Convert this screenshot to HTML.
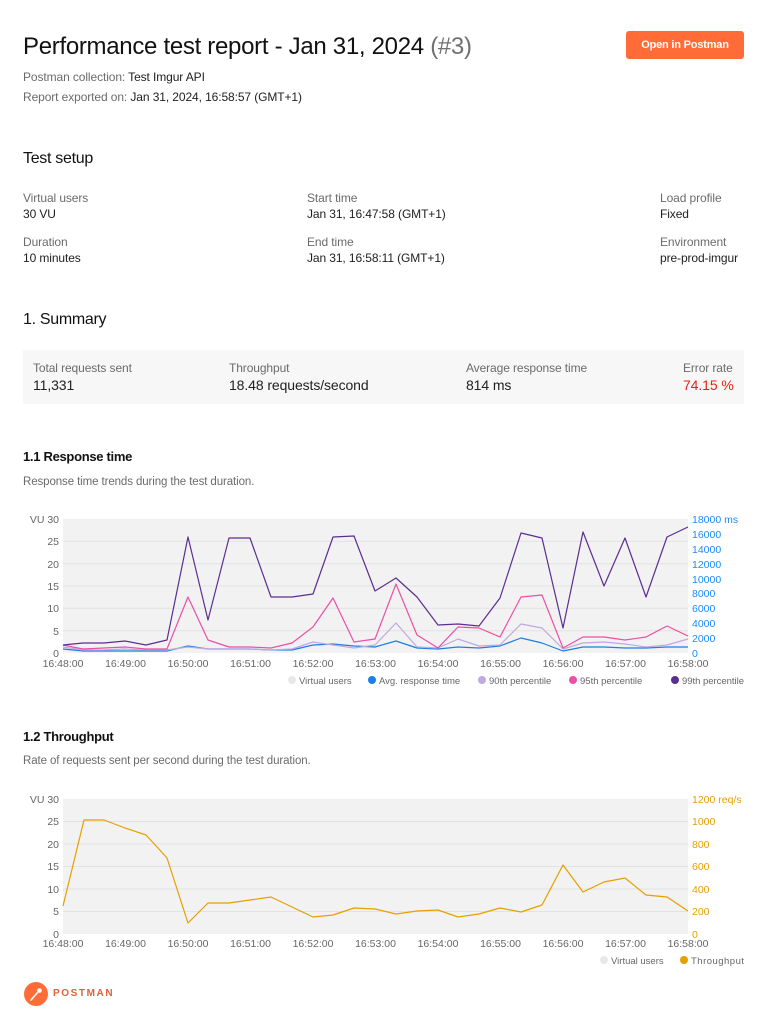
<!DOCTYPE html>
<html><head><meta charset="utf-8"><style>
*{margin:0;padding:0;box-sizing:border-box}
body{width:768px;height:1024px;background:#fff;font-family:"Liberation Sans",sans-serif;color:#212121;position:relative;overflow:hidden}
.a{position:absolute;white-space:nowrap;line-height:1}
.g{color:#6b6b6b}
.s{font-size:12px;letter-spacing:-0.1px}
.v{font-size:12px;letter-spacing:-0.1px;color:#212121}
</style></head><body>
<div class="a" style="left:23px;top:35px;font-size:24px;letter-spacing:-0.3px;color:#111">Performance test report - Jan 31, 2024 <span style="color:#707070">(#3)</span></div>
<div class="a" style="left:626px;top:31px;width:118px;height:28px;background:#ff6c37;border-radius:3px;color:#fff;font-size:11px;font-weight:bold;text-align:center;line-height:28px;letter-spacing:-0.2px">Open in Postman</div>
<div class="a s g" style="left:23px;top:71px">Postman collection: <span style="color:#212121">Test Imgur API</span></div>
<div class="a s g" style="left:23px;top:91px">Report exported on: <span style="color:#212121">Jan 31, 2024, 16:58:57 (GMT+1)</span></div>

<div class="a" style="left:23px;top:151px;font-size:16px;letter-spacing:-0.3px;color:#111">Test setup</div>
<div class="a s g" style="left:23px;top:192px">Virtual users</div>
<div class="a v" style="left:23px;top:208px">30 VU</div>
<div class="a s g" style="left:23px;top:236px">Duration</div>
<div class="a v" style="left:23px;top:252px">10 minutes</div>
<div class="a s g" style="left:307px;top:192px">Start time</div>
<div class="a v" style="left:307px;top:208px">Jan 31, 16:47:58 (GMT+1)</div>
<div class="a s g" style="left:307px;top:236px">End time</div>
<div class="a v" style="left:307px;top:252px">Jan 31, 16:58:11 (GMT+1)</div>
<div class="a s g" style="left:660px;top:192px">Load profile</div>
<div class="a v" style="left:660px;top:208px">Fixed</div>
<div class="a s g" style="left:660px;top:236px">Environment</div>
<div class="a v" style="left:660px;top:252px">pre-prod-imgur</div>

<div class="a" style="left:23px;top:312px;font-size:16px;letter-spacing:-0.3px;color:#111">1. Summary</div>
<div class="a" style="left:23px;top:350px;width:721px;height:54px;background:#f7f7f7"></div>
<div class="a s g" style="left:33px;top:362px">Total requests sent</div>
<div class="a" style="left:33px;top:378px;font-size:14px;letter-spacing:-0.1px">11,331</div>
<div class="a s g" style="left:229px;top:362px">Throughput</div>
<div class="a" style="left:229px;top:378px;font-size:14px;letter-spacing:-0.1px">18.48 requests/second</div>
<div class="a s g" style="left:466px;top:362px">Average response time</div>
<div class="a" style="left:466px;top:378px;font-size:14px;letter-spacing:-0.1px">814 ms</div>
<div class="a s g" style="left:683px;top:362px">Error rate</div>
<div class="a" style="left:683px;top:378px;font-size:14px;letter-spacing:-0.1px;color:#eb2013">74.15 %</div>

<div class="a" style="left:23px;top:450px;font-size:13px;font-weight:bold;letter-spacing:-0.3px;color:#111">1.1 Response time</div>
<div class="a s g" style="left:23px;top:477px;font-size:11.5px">Response time trends during the test duration.</div>

<svg class="a" style="left:0;top:505px" width="768" height="190" viewBox="0 505 768 190" font-family="Liberation Sans, sans-serif" font-size="10.5">
<rect x="63" y="519" width="625" height="134" fill="#f2f2f2"/>
<g stroke="#e2e2e2" stroke-width="1">
<line x1="63" x2="688" y1="541.3" y2="541.3"/><line x1="63" x2="688" y1="563.7" y2="563.7"/><line x1="63" x2="688" y1="586" y2="586"/><line x1="63" x2="688" y1="608.3" y2="608.3"/><line x1="63" x2="688" y1="630.7" y2="630.7"/>
</g>
<g fill="#666" text-anchor="end">
<text x="59" y="523">VU 30</text><text x="59" y="545">25</text><text x="59" y="568">20</text><text x="59" y="590">15</text><text x="59" y="612">10</text><text x="59" y="635">5</text><text x="59" y="657">0</text>
</g>
<g fill="#1a8cff">
<text x="692" y="523">18000 ms</text><text x="692" y="538">16000</text><text x="692" y="553">14000</text><text x="692" y="568">12000</text><text x="692" y="583">10000</text><text x="692" y="597">8000</text><text x="692" y="612">6000</text><text x="692" y="627">4000</text><text x="692" y="642">2000</text><text x="692" y="657">0</text>
</g>
<g fill="#666" text-anchor="middle">
<text x="63" y="667">16:48:00</text><text x="125.5" y="667">16:49:00</text><text x="188" y="667">16:50:00</text><text x="250.5" y="667">16:51:00</text><text x="313" y="667">16:52:00</text><text x="375.5" y="667">16:53:00</text><text x="438" y="667">16:54:00</text><text x="500.5" y="667">16:55:00</text><text x="563" y="667">16:56:00</text><text x="625.5" y="667">16:57:00</text><text x="688" y="667">16:58:00</text>
</g>
<g fill="none" stroke-width="1.2" stroke-linejoin="round">
<polyline stroke="#1a7fe6" points="63,649 83,651 104,651 125,651 146,651 167,651 188,646 208,649 229,649 250,649 271,650 292,650 313,645 333,644 354,646 375,647 396,641 417,648 438,649 458,647 479,648 500,646 521,638 542,643 563,651 583,647 604,647 625,648 646,648 667,647 688,647"/>
<polyline stroke="#c0a8e0" points="63,647 83,650 104,650 125,649 146,650 167,650 188,647 208,649 229,649 250,649 271,650 292,649 313,642 333,645 354,648 375,645 396,623 417,647 438,648 458,639 479,646 500,645 521,624 542,628 563,649 583,643 604,642 625,644 646,647 667,645 688,639"/>
<polyline stroke="#ec4fa5" points="63,645 83,649 104,648 125,647 146,649 167,649 188,597 208,640 229,647 250,647 271,648 292,643 313,627 333,598 354,642 375,639 396,584 417,635 438,648 458,627 479,628 500,637 521,597 542,595 563,648 583,637 604,637 625,640 646,637 667,626 688,636"/>
<polyline stroke="#5b2d91" points="63,645 83,643 104,643 125,641 146,645 167,640 188,537 208,620 229,538 250,538 271,597 292,597 313,594 333,537 354,536 375,591 396,578 417,597 438,625 458,624 479,626 500,598 521,533 542,538 563,628 583,532 604,586 625,538 646,597 667,537 688,527"/>
</g>
<g font-size="9.5" fill="#666">
<circle cx="292" cy="680" r="4" fill="#e8e8e8"/><text x="299" y="684">Virtual users</text>
<circle cx="372" cy="680" r="4" fill="#1a7fe6"/><text x="379" y="684">Avg. response time</text>
<circle cx="482" cy="680" r="4" fill="#c0a8e0"/><text x="489" y="684">90th percentile</text>
<circle cx="573" cy="680" r="4" fill="#ec4fa5"/><text x="580" y="684">95th percentile</text>
<circle cx="675" cy="680" r="4" fill="#5b2d91"/><text x="682" y="684" textLength="62">99th percentile</text>
</g>
</svg>

<div class="a" style="left:23px;top:730px;font-size:13px;font-weight:bold;letter-spacing:-0.3px;color:#111">1.2 Throughput</div>
<div class="a s g" style="left:23px;top:756px;font-size:11.5px">Rate of requests sent per second during the test duration.</div>

<svg class="a" style="left:0;top:785px" width="768" height="190" viewBox="0 785 768 190" font-family="Liberation Sans, sans-serif" font-size="10.5">
<rect x="63" y="799" width="625" height="135" fill="#f2f2f2"/>
<g stroke="#e2e2e2" stroke-width="1">
<line x1="63" x2="688" y1="821.5" y2="821.5"/><line x1="63" x2="688" y1="844" y2="844"/><line x1="63" x2="688" y1="866.5" y2="866.5"/><line x1="63" x2="688" y1="889" y2="889"/><line x1="63" x2="688" y1="911.5" y2="911.5"/>
</g>
<g fill="#666" text-anchor="end">
<text x="59" y="803">VU 30</text><text x="59" y="825">25</text><text x="59" y="848">20</text><text x="59" y="870">15</text><text x="59" y="893">10</text><text x="59" y="915">5</text><text x="59" y="938">0</text>
</g>
<g fill="#e5a000">
<text x="692" y="803">1200 req/s</text><text x="692" y="825">1000</text><text x="692" y="848">800</text><text x="692" y="870">600</text><text x="692" y="893">400</text><text x="692" y="915">200</text><text x="692" y="938">0</text>
</g>
<g fill="#666" text-anchor="middle">
<text x="63" y="947">16:48:00</text><text x="125.5" y="947">16:49:00</text><text x="188" y="947">16:50:00</text><text x="250.5" y="947">16:51:00</text><text x="313" y="947">16:52:00</text><text x="375.5" y="947">16:53:00</text><text x="438" y="947">16:54:00</text><text x="500.5" y="947">16:55:00</text><text x="563" y="947">16:56:00</text><text x="625.5" y="947">16:57:00</text><text x="688" y="947">16:58:00</text>
</g>
<polyline fill="none" stroke="#e5a000" stroke-width="1.2" stroke-linejoin="round" points="63,906 84,820 104,820 125,828 146,835 158,848 167,858 188,923 208,903 229,903 250,900 271,897 292,907 313,917 333,915 354,908 375,909 396,914 417,911 438,910 458,917 479,914 500,908 521,912 542,905 563,865 583,892 604,882 625,878 646,895 667,897 688,911"/>
<g font-size="9.5" fill="#666">
<circle cx="604" cy="960" r="4" fill="#e8e8e8"/><text x="611" y="964">Virtual users</text>
<circle cx="684" cy="960" r="4" fill="#e5a000"/><text x="691" y="964" textLength="53">Throughput</text>
</g>
</svg>

<svg class="a" style="left:23px;top:981px" width="26" height="26" viewBox="0 0 26 26">
<circle cx="13" cy="13" r="12" fill="#ff6c37"/>
<path d="M8 19 L15 11" stroke="#fff" stroke-width="1.6" stroke-linecap="round"/>
<circle cx="16.5" cy="9.5" r="2.3" fill="#fff"/>
</svg>
<div class="a" style="left:53px;top:989px;font-size:10px;letter-spacing:1.6px;color:#e0603a;font-weight:bold">POSTMAN</div>
</body></html>
